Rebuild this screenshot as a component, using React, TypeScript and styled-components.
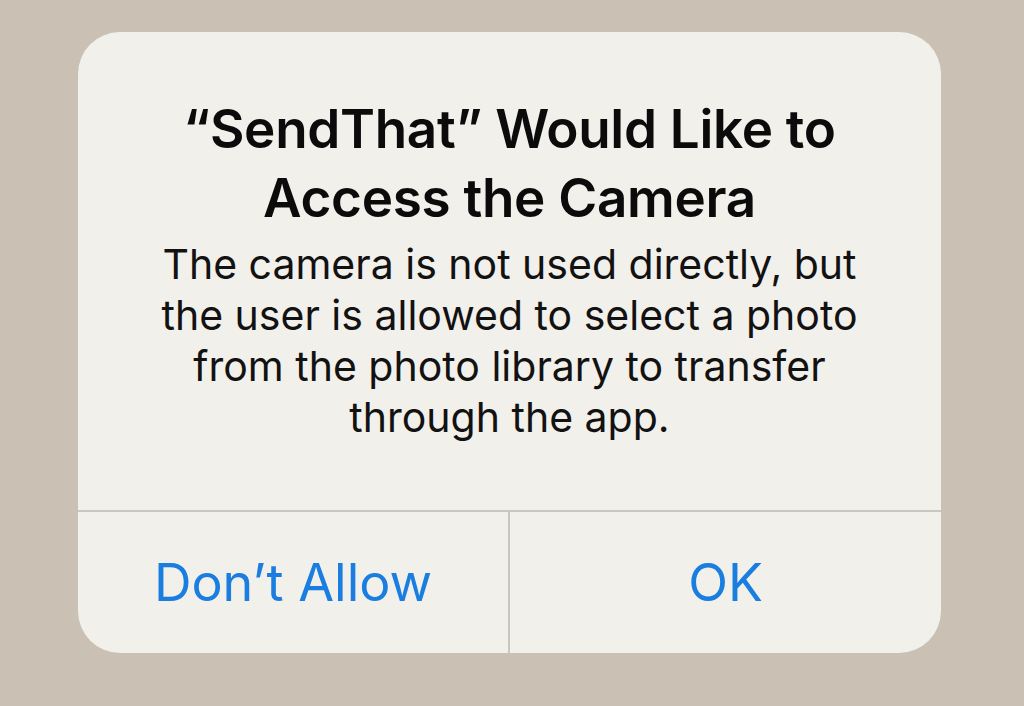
import React from "react";
import styled, { createGlobalStyle } from "styled-components";

const GlobalStyle = createGlobalStyle`
  html, body {
    margin: 0;
    padding: 0;
    background: #cac1b4;
    width: 1024px;
    height: 706px;
    overflow: hidden;
  }
  body {
    font-family: Inter, "Liberation Sans", Arial, sans-serif;
    -webkit-font-smoothing: antialiased;
  }
`;

const Page = styled.div`
  width: 1024px;
  height: 706px;
  box-sizing: border-box;
  padding: 32px 0 0 78px;
`;

const Alert = styled.div`
  width: 863px;
  height: 621px;
  background: #f2f0eb;
  border-radius: 42px;
  display: flex;
  flex-direction: column;
  overflow: hidden;
`;

const Content = styled.div`
  flex: 1;
  display: flex;
  flex-direction: column;
  align-items: center;
  padding-top: 63px;
  box-sizing: border-box;
`;

const Title = styled.h1`
  margin: 0;
  font-family: Inter, "Liberation Sans", Arial, sans-serif;
  font-weight: 600;
  font-size: 53px;
  line-height: 69px;
  letter-spacing: -0.3px;
  color: #0b0b0b;
  text-align: center;
`;

const Message = styled.p`
  margin: 6px 0 0;
  font-family: Inter, "Liberation Sans", Arial, sans-serif;
  font-weight: 400;
  font-size: 41px;
  line-height: 51px;
  color: #121212;
  text-align: center;
`;

const Actions = styled.div`
  display: grid;
  grid-template-columns: 432px 1fr;
  height: 141px;
  border-top: 2px solid #cbc7bf;
`;

const ActionButton = styled.button<{ $divider?: boolean }>`
  appearance: none;
  background: transparent;
  border: none;
  border-right: ${(p) => (p.$divider ? "2px solid #cbc7bf" : "none")};
  margin: 0;
  padding: 0;
  display: flex;
  align-items: center;
  justify-content: center;
  font-family: Inter, "Liberation Sans", Arial, sans-serif;
  font-weight: 400;
  font-size: 52px;
  color: #1a7de0;
  cursor: pointer;
`;

export default function App() {
  return (
    <>
      <GlobalStyle />
      <Page>
        <Alert>
          <Content>
            <Title>
              “SendThat” Would Like to
              <br />
              Access the Camera
            </Title>
            <Message>
              The camera is not used directly, but
              <br />
              the user is allowed to select a photo
              <br />
              from the photo library to transfer
              <br />
              through the app.
            </Message>
          </Content>
          <Actions>
            <ActionButton $divider>Don’t Allow</ActionButton>
            <ActionButton>OK</ActionButton>
          </Actions>
        </Alert>
      </Page>
    </>
  );
}
